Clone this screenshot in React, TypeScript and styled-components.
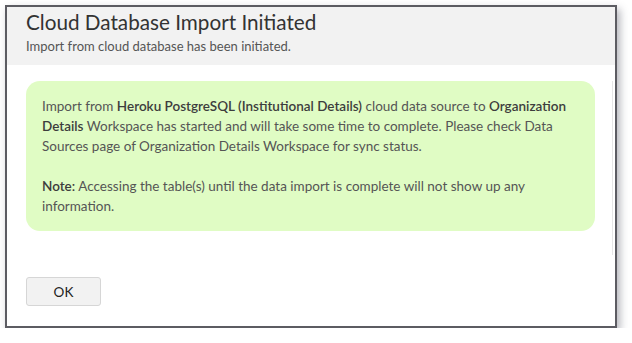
import React from "react";
import styled, { createGlobalStyle } from "styled-components";

const GlobalStyle = createGlobalStyle`
  html, body {
    margin: 0;
    padding: 0;
    background: #ffffff;
  }
  body {
    font-family: Lato, "Liberation Sans", sans-serif;
    -webkit-font-smoothing: antialiased;
  }
`;

function App() {
  return (
    <>
      <GlobalStyle />
      <Page>
        <Dialog>
          <Header>
            <Title>Cloud Database Import Initiated</Title>
            <Subtitle>Import from cloud database has been initiated.</Subtitle>
          </Header>
          <Body>
            <Content>
              <Notice>
                <p>
                  Import from <b>Heroku PostgreSQL (Institutional Details)</b>{" "}
                  cloud data source to <b>Organization Details</b> Workspace has
                  started and will take some time to complete. Please check Data
                  Sources page of Organization Details Workspace for sync status.
                </p>
                <p>
                  <b>Note:</b> Accessing the table(s) until the data import is
                  complete will not show up any information.
                </p>
              </Notice>
            </Content>
            <Track />
          </Body>
          <Footer>
            <Button>OK</Button>
          </Footer>
        </Dialog>
      </Page>
    </>
  );
}

export default App;

const Page = styled.div`
  padding: 5px 0 0 5px;
`;

const Dialog = styled.div`
  width: 608px;
  height: 319px;
  border: 2px solid #5c5c62;
  background: #ffffff;
  box-shadow: 3px 4px 8px rgba(40, 44, 60, 0.35);
  display: flex;
  flex-direction: column;
`;

const Header = styled.div`
  background: #f2f2f2;
  padding: 3px 19px 11px;
  height: 44px;
`;

const Title = styled.h1`
  margin: 0;
  font-size: 20.7px;
  line-height: 24px;
  font-weight: 400;
  color: #333333;
`;

const Subtitle = styled.div`
  margin-top: 4px;
  font-size: 13px;
  line-height: 16px;
  color: #555555;
`;

const Body = styled.div`
  display: flex;
  align-items: flex-start;
  padding: 16px 0 0 19px;
`;

const Content = styled.div`
  width: 569px;
`;

const Notice = styled.div`
  background: #e0fcc4;
  border-radius: 14px;
  padding: 15px 16px;
  font-size: 13.5px;
  line-height: 20px;
  color: #555555;

  p {
    margin: 0;
  }
  p + p {
    margin-top: 20px;
  }
  b {
    font-weight: 600;
    color: #3d3d3d;
  }
`;

const Track = styled.div`
  width: 1px;
  height: 174px;
  margin-left: 17px;
  background: #e6e6e6;
`;

const Footer = styled.div`
  padding: 22px 19px 0;
`;

const Button = styled.button`
  width: 75px;
  height: 29px;
  background: #f2f2f2;
  border: 1px solid #d6d6d6;
  border-radius: 3px;
  font-family: Lato, "Liberation Sans", sans-serif;
  font-size: 13.5px;
  color: #222222;
  padding: 0;
`;
